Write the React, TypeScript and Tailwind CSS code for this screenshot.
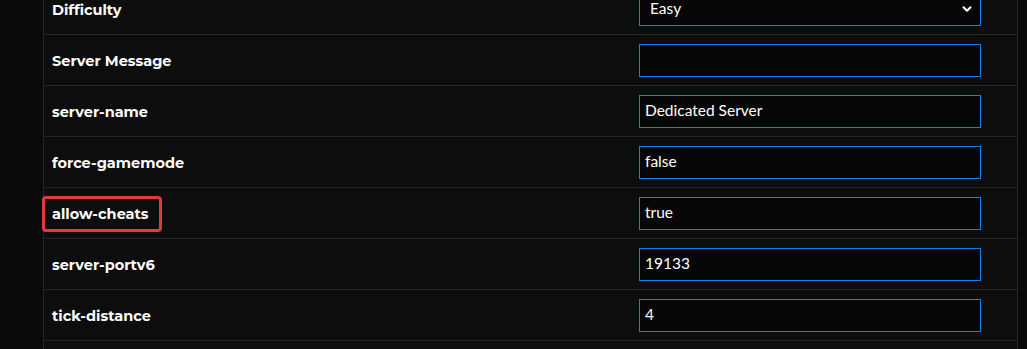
import { ChevronDown } from 'lucide-react'

const ROWS: { key: string; value: string; select?: boolean; mark?: boolean }[] = [
  { key: 'Difficulty', value: 'Easy', select: true },
  { key: 'Server Message', value: '' },
  { key: 'server-name', value: 'Dedicated Server' },
  { key: 'force-gamemode', value: 'false' },
  { key: 'allow-cheats', value: 'true', mark: true },
  { key: 'server-portv6', value: '19133' },
  { key: 'tick-distance', value: '4' },
]

export default function App() {
  return (
    <div className="flex h-[349px] w-full overflow-hidden bg-[#0a0a0a] text-white">
      <div className="w-[43px] shrink-0" />
      <div className="w-[975px] shrink-0 border-x border-[#262626] bg-[#0d0d0d]">
        <div className="mt-[-16px]">
          {ROWS.map(r => (
            <div key={r.key} className="flex h-[51px] items-center border-b border-[#262626]">
              <div className="flex-1 pl-[8px]">
                <span className="relative font-['Montserrat','Noto_Sans',sans-serif] text-[14.5px] font-bold text-white">
                  {r.key}
                  {r.mark && (
                    <span className="absolute -left-[10px] -right-[13px] -top-[9px] -bottom-[9px] rounded-[4px] border-[3px] border-[#e0393e]" />
                  )}
                </span>
              </div>
              <div className="mr-[36px] w-[342px]">
                {r.select ? (
                  <div className="flex h-[33px] items-center justify-between border border-[#0a84f0] bg-[#070707] pl-[10px] pr-[6px] font-['Lato','Open_Sans',sans-serif] text-[15.5px] text-white">
                    <span>{r.value}</span>
                    <ChevronDown size={14} strokeWidth={3.5} />
                  </div>
                ) : (
                  <div className="flex h-[33px] items-center border border-[#0a84f0] bg-[#070707] pl-[5px] font-['Lato','Open_Sans',sans-serif] text-[15.5px] text-white">
                    {r.value}
                  </div>
                )}
              </div>
            </div>
          ))}
        </div>
      </div>
      <div className="flex-1" />
    </div>
  )
}
